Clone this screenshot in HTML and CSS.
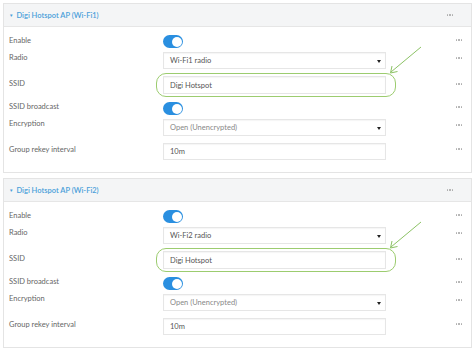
FILE: index.html
```html
<!DOCTYPE html>
<html lang="en">

<head>
  <meta charset="UTF-8">
  <meta name="viewport" content="width=device-width, initial-scale=1.0">
  <title>Digi Hotspot AP</title>
  <link rel="stylesheet" href="styles.css">
</head>

<body>
  <!-- Wi-Fi1 -->
  <div class="panel">
    <div class="panel-header">
      <span class="panel-title"><span class="caret">&#9660;</span>Digi Hotspot AP (Wi-Fi1)</span>
      <span class="more"><i></i><i></i><i></i></span>
    </div>
    <div class="panel-body">
      <div class="row row-toggle">
        <span class="label">Enable</span>
        <span class="control"><span class="toggle on"></span></span>
        <span class="more"><i></i><i></i><i></i></span>
      </div>
      <div class="row row-select">
        <span class="label">Radio</span>
        <span class="control"><span class="select">Wi-Fi1 radio</span></span>
        <span class="more"><i></i><i></i><i></i></span>
      </div>
      <div class="row row-input">
        <span class="label">SSID</span>
        <span class="control">
          <span class="input">Digi Hotspot</span>
          <span class="highlight"></span>
          <svg class="pointer" width="36" height="30" viewBox="0 0 36 30">
            <line x1="33" y1="2" x2="3" y2="27" stroke="#8cc265" stroke-width="1"/>
            <polyline points="4,21 2.5,28 9.5,26.5" fill="none" stroke="#8cc265" stroke-width="1"/>
          </svg>
        </span>
        <span class="more"><i></i><i></i><i></i></span>
      </div>
      <div class="row row-toggle2">
        <span class="label">SSID broadcast</span>
        <span class="control"><span class="toggle on"></span></span>
        <span class="more"><i></i><i></i><i></i></span>
      </div>
      <div class="row row-select2">
        <span class="label">Encryption</span>
        <span class="control"><span class="select muted">Open (Unencrypted)</span></span>
        <span class="more"><i></i><i></i><i></i></span>
      </div>
      <div class="row row-input2">
        <span class="label">Group rekey interval</span>
        <span class="control"><span class="input">10m</span></span>
        <span class="more"><i></i><i></i><i></i></span>
      </div>
    </div>
  </div>

  <!-- Wi-Fi2 -->
  <div class="panel">
    <div class="panel-header">
      <span class="panel-title"><span class="caret">&#9660;</span>Digi Hotspot AP (Wi-Fi2)</span>
      <span class="more"><i></i><i></i><i></i></span>
    </div>
    <div class="panel-body">
      <div class="row row-toggle">
        <span class="label">Enable</span>
        <span class="control"><span class="toggle on"></span></span>
        <span class="more"><i></i><i></i><i></i></span>
      </div>
      <div class="row row-select">
        <span class="label">Radio</span>
        <span class="control"><span class="select">Wi-Fi2 radio</span></span>
        <span class="more"><i></i><i></i><i></i></span>
      </div>
      <div class="row row-input">
        <span class="label">SSID</span>
        <span class="control">
          <span class="input">Digi Hotspot</span>
          <span class="highlight"></span>
          <svg class="pointer" width="36" height="30" viewBox="0 0 36 30">
            <line x1="33" y1="2" x2="3" y2="27" stroke="#8cc265" stroke-width="1"/>
            <polyline points="4,21 2.5,28 9.5,26.5" fill="none" stroke="#8cc265" stroke-width="1"/>
          </svg>
        </span>
        <span class="more"><i></i><i></i><i></i></span>
      </div>
      <div class="row row-toggle2">
        <span class="label">SSID broadcast</span>
        <span class="control"><span class="toggle on"></span></span>
        <span class="more"><i></i><i></i><i></i></span>
      </div>
      <div class="row row-select2">
        <span class="label">Encryption</span>
        <span class="control"><span class="select muted">Open (Unencrypted)</span></span>
        <span class="more"><i></i><i></i><i></i></span>
      </div>
      <div class="row row-input2">
        <span class="label">Group rekey interval</span>
        <span class="control"><span class="input">10m</span></span>
        <span class="more"><i></i><i></i><i></i></span>
      </div>
    </div>
  </div>
</body>

</html>
```

FILE: styles.css
```css
* {
  margin: 0;
  padding: 0;
  box-sizing: border-box;
}

body {
  font-family: Lato, 'Open Sans', sans-serif;
  font-size: 7.5px;
  color: #666;
  background: white;
  padding: 3px 3px 0 3px;
}

.panel {
  width: 469px;
  border: 1px solid #e4e4e4;
  margin-bottom: 5px;
}

.panel-header {
  height: 23px;
  background: #f4f5f6;
  border-bottom: 1px solid #e6e6e6;
  display: flex;
  align-items: center;
  justify-content: space-between;
  padding: 0 9px 0 5px;
}

.panel-title {
  color: #4a9fda;
  font-size: 7.5px;
  font-weight: 600;
}

.caret {
  font-size: 4.5px;
  margin-right: 3px;
  vertical-align: 1px;
}

.panel-body {
  padding: 7px 0 12px 0;
}

.row {
  display: grid;
  grid-template-columns: 159px 223px 1fr;
  align-items: start;
}

.label {
  padding-left: 5px;
  color: #666;
}

.control {
  position: relative;
  display: block;
}

.more {
  display: flex;
  gap: 1px;
  justify-self: end;
  padding-right: 9px;
}

.more i {
  width: 1.5px;
  height: 1.5px;
  background: #aaa;
  border-radius: 50%;
}

.row .more {
  margin-top: 5px;
}

/* row heights */
.row-toggle {
  height: 15px;
  margin-bottom: 3px;
}

.row-toggle .label {
  padding-top: 2px;
}

.row-select {
  height: 17px;
  margin-bottom: 7px;
}

.row-select .label {
  padding-top: 1px;
}

.row-input {
  height: 18px;
  margin-bottom: 7px;
}

.row-input .label {
  padding-top: 3px;
}

.row-input .more {
  margin-top: 7px;
}

.row-toggle2 {
  height: 13px;
  margin-bottom: 5px;
}

.row-toggle2 .label {
  padding-top: 1px;
}

.row-select2 {
  height: 17px;
  margin-bottom: 7px;
}

.row-input2 {
  height: 17px;
}

.row-input2 .label {
  padding-top: 2px;
}

/* controls */
.toggle {
  display: block;
  width: 20px;
  height: 13px;
  border-radius: 7px;
  background: #2a8fe0;
  position: relative;
  margin-top: 1px;
}

.toggle::after {
  content: '';
  position: absolute;
  top: 1.5px;
  right: 1.5px;
  width: 10px;
  height: 10px;
  border-radius: 50%;
  background: white;
}

.select,
.input {
  display: flex;
  align-items: center;
  height: 17px;
  padding-left: 6px;
  border: 1px solid #e6e6e6;
  background: white;
  color: #555;
  box-shadow: inset 0 1px 1px rgba(0, 0, 0, 0.04);
}

.row-input .input {
  height: 18px;
}

.select {
  position: relative;
}

.select::after {
  content: '';
  position: absolute;
  right: 4px;
  top: 7px;
  border-left: 2px solid transparent;
  border-right: 2px solid transparent;
  border-top: 3px solid #222;
}

.select.muted {
  color: #888;
}

.highlight {
  position: absolute;
  left: -7px;
  top: -3px;
  width: 240px;
  height: 24px;
  border: 1px solid #9ccc6f;
  border-radius: 10px;
}

.pointer {
  position: absolute;
  left: 225px;
  top: -31px;
}
```
